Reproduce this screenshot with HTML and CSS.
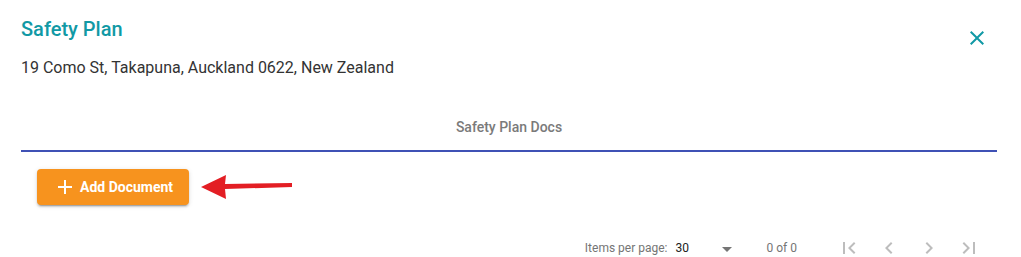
FILE: index.html
```html
<!DOCTYPE html>
<html lang="en">
<head>
<meta charset="UTF-8" />
<meta name="viewport" content="width=device-width, initial-scale=1.0" />
<title>Safety Plan</title>
<link rel="stylesheet" href="styles.css">
</head>
<body>

<div class="dialog">
  <!-- Header with title and close -->
  <div class="dialog-header">
    <div>
      <h2 class="dialog-title">Safety Plan</h2>
      <div class="address">19 Como St, Takapuna, Auckland 0622, New Zealand</div>
    </div>
    <button class="close-btn" aria-label="Close">
      <svg viewBox="0 0 24 24" width="24" height="24"><path d="M19 6.41L17.59 5 12 10.59 6.41 5 5 6.41 10.59 12 5 17.59 6.41 19 12 13.41 17.59 19 19 17.59 13.41 12z"/></svg>
    </button>
  </div>

  <!-- Tabs -->
  <div class="tabs">
    <div class="tab active">Safety Plan Docs</div>
  </div>

  <div class="actions">
    <button class="add-btn">
      <svg viewBox="0 0 24 24" width="24" height="24"><path d="M19 13h-6v6h-2v-6H5v-2h6V5h2v6h6v2z"/></svg>
      <span>Add Document</span>
    </button>
    <svg class="pointer" viewBox="0 0 92 28" width="92" height="28">
      <path d="M0 14 L25 2 L24 11 L91 10 L91 14 L24 16 L25 26 Z" fill="#e31e24"/>
    </svg>
  </div>

  <!-- Paginator -->
  <div class="paginator">
    <span class="pg-label">Items per page:</span>
    <div class="pg-select">
      <span>30</span>
      <span class="pg-caret"></span>
    </div>
    <span class="pg-range">0 of 0</span>
    <button class="pg-btn" disabled><svg viewBox="0 0 24 24" width="24" height="24"><path d="M18.41 16.59L13.82 12l4.590-4.59L17 6l-6 6 6 6zM6 6h2v12H6z"/></svg></button>
    <button class="pg-btn" disabled><svg viewBox="0 0 24 24" width="24" height="24"><path d="M15.41 7.41L14 6l-6 6 6 6 1.41-1.41L10.83 12z"/></svg></button>
    <button class="pg-btn" disabled><svg viewBox="0 0 24 24" width="24" height="24"><path d="M10 6L8.59 7.41 13.17 12l-4.58 4.59L10 18l6-6z"/></svg></button>
    <button class="pg-btn" disabled><svg viewBox="0 0 24 24" width="24" height="24"><path d="M5.59 7.41L10.18 12l-4.59 4.59L7 18l6-6-6-6zM16 6h2v12h-2z"/></svg></button>
  </div>
</div>

</body>
</html>
```

FILE: styles.css
```css
body {
  margin: 0;
  background: #fff;
  font-family: Roboto, 'Liberation Sans', sans-serif;
  color: #333;
}

.dialog {
  padding: 0 24px 0 21px;
}

.dialog-header {
  display: flex;
  justify-content: space-between;
  align-items: flex-start;
  padding-top: 17px;
}

.dialog-title {
  margin: 0;
  font-size: 20px;
  line-height: 24px;
  font-weight: 500;
  color: #1199a5;
}

.address {
  margin-top: 17px;
  font-size: 16px;
  line-height: 20px;
  color: #333;
}

.close-btn {
  margin: 9px 8px 0 0;
  padding: 0;
  border: none;
  background: none;
  fill: #1199a5;
  display: flex;
  cursor: pointer;
}

/* tabs */
.tabs {
  display: flex;
  margin-top: 25px;
  border-bottom: 2px solid #3f51b5;
}
.tab {
  flex: 1;
  height: 47px;
  display: flex;
  align-items: center;
  justify-content: center;
  font-size: 14px;
  font-weight: 500;
  color: #7a7a7a;
}

.actions {
  display: flex;
  align-items: center;
  margin-top: 17px;
  padding-left: 16px;
}

.add-btn {
  display: flex;
  align-items: center;
  height: 36px;
  padding: 0 16px 0 16px;
  border: none;
  border-radius: 4px;
  background: #f7931e;
  color: #fff;
  fill: #fff;
  font-family: Roboto, 'Liberation Sans', sans-serif;
  font-size: 14px;
  font-weight: 700;
  box-shadow: 0 3px 1px -2px rgba(0,0,0,.2), 0 2px 2px 0 rgba(0,0,0,.14), 0 1px 5px 0 rgba(0,0,0,.12);
  cursor: pointer;
}
.add-btn span { margin-left: 3px; }

.pointer {
  margin-left: 12px;
}

/* paginator */
.paginator {
  display: flex;
  align-items: center;
  justify-content: flex-end;
  height: 56px;
  margin-top: 15px;
  padding-right: 8px;
  font-size: 12px;
  color: #757575;
}
.pg-select {
  display: flex;
  align-items: center;
  justify-content: space-between;
  width: 56px;
  margin-left: 8px;
  color: #212121;
}
.pg-caret {
  width: 0;
  height: 0;
  border-left: 5px solid transparent;
  border-right: 5px solid transparent;
  border-top: 5px solid #757575;
  margin-top: 2px;
}
.pg-range {
  margin: 0 32px 0 35px;
}
.pg-btn {
  width: 40px;
  height: 40px;
  padding: 0;
  border: none;
  background: none;
  display: flex;
  align-items: center;
  justify-content: center;
  fill: #bdbdbd;
}
```
